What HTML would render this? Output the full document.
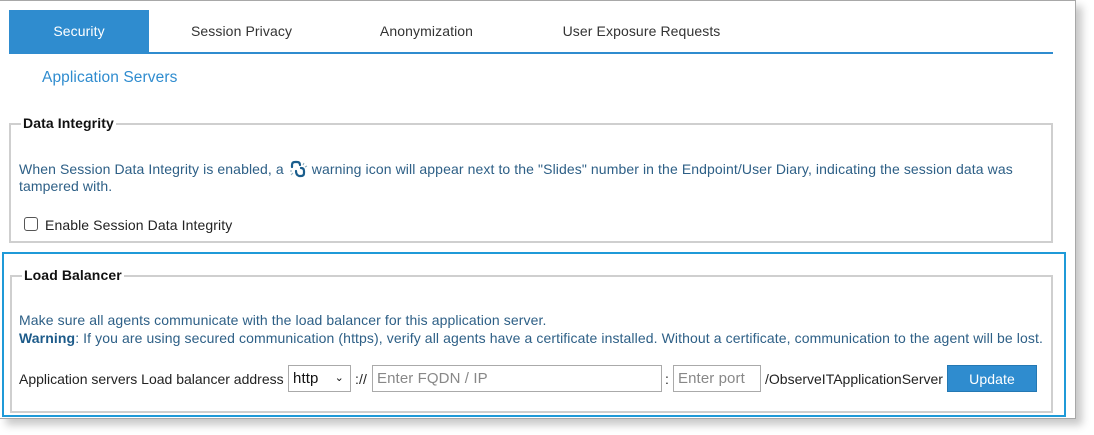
<!DOCTYPE html>
<html><head><meta charset="utf-8"><style>
*{box-sizing:border-box;margin:0;padding:0}
body{width:1094px;height:435px;background:#fff;font-family:"Liberation Sans",sans-serif;position:relative;overflow:hidden;color:#2d5f86;font-size:14px;letter-spacing:.1px}
.frame{position:absolute;left:0;top:0;width:1076px;height:419px;border:1px solid #a8a8a8;border-left:none;background:#fff;box-shadow:6px 6px 8px rgba(0,0,0,.22)}
.tabs{position:absolute;left:9px;top:10px;width:1044px;height:44px;border-bottom:2px solid #2f8ccf}
.tab{position:absolute;top:0;height:42px;line-height:42px;text-align:center;color:#333;font-size:14px}
.tab.on{background:#2f8ccf;color:#fff;left:0;width:140px}
.sub{position:absolute;left:42px;top:69px;color:#2f8ccf;font-size:15.5px}
.fs{position:absolute;border:2px solid #cfcfcf}
.lg{position:absolute;top:-10px;left:10px;background:#fff;padding:0 2px;font-weight:bold;color:#111;font-size:14px}
.t{position:absolute;white-space:nowrap;font-size:14px}
.hl{position:absolute;left:2px;top:252px;width:1064px;height:165px;border:2px solid #1f9ad8}
.inp{position:absolute;border:1px solid #aaa;height:27px;line-height:25px;color:#888;padding-left:4px;font-size:15px;background:#fff}
.btn{position:absolute;left:947px;top:365px;width:90px;height:27px;background:#2f8ccf;color:#fff;text-align:center;line-height:27px;font-size:14px;border:1px solid #2478b3}
</style></head><body>
<div class="frame"></div>
<div class="tabs">
<div class="tab on">Security</div>
<div class="tab" style="left:170px;width:125px">Session Privacy</div>
<div class="tab" style="left:355px;width:125px">Anonymization</div>
<div class="tab" style="left:535px;width:195px">User Exposure Requests</div>
</div>
<div class="sub">Application Servers</div>
<div class="fs" style="left:9px;top:123px;width:1044px;height:120px"><div class="lg">Data Integrity</div></div>
<div class="t" style="left:19px;top:160px;color:#2d5f86">When Session Data Integrity is enabled, a <svg width="20" height="18" viewBox="0 0 20 18" style="vertical-align:-4px"><path d="M4 7 L4 5 Q4 2 7 2 L9 2 Q12 2 12 5" fill="none" stroke="#1a5d8c" stroke-width="2.2" stroke-linecap="round"/><path d="M8 11 Q8 15 11 16 L13 16 Q16 16 16 13 L16 11 Q16 8 13 8" fill="none" stroke="#1a5d8c" stroke-width="2.2" stroke-linecap="round"/><path d="M2 11l2 0M3 15l2-2M15 5l1-2M17 7l2-1" stroke="#8ab" stroke-width="1"/></svg> warning icon will appear next to the "Slides" number in the Endpoint/User Diary, indicating the session data was</div>
<div class="t" style="left:19px;top:178px">tampered with.</div>
<div style="position:absolute;left:24px;top:217px;width:14px;height:14px;border:1px solid #555;border-radius:3px"></div>
<div class="t" style="left:45px;top:217px;color:#222">Enable Session Data Integrity</div>
<div class="hl"></div>
<div class="fs" style="left:10px;top:275px;width:1043px;height:138px"><div class="lg">Load Balancer</div></div>
<div class="t" style="left:19px;top:312px">Make sure all agents communicate with the load balancer for this application server.</div>
<div class="t" style="left:19px;top:330px"><b style="color:#1d5b8a">Warning</b>: If you are using secured communication (https), verify all agents have a certificate installed. Without a certificate, communication to the agent will be lost.</div>
<div class="t" style="left:19px;top:371px;color:#222;letter-spacing:0">Application servers Load balancer address</div>
<div class="inp" style="left:288px;top:365px;width:63px;color:#111;font-size:15px">http<span style="position:absolute;right:6px;top:0;font-size:11px">&#8964;</span></div>
<div class="t" style="left:355px;top:371px;color:#222">://</div>
<div class="inp" style="left:372px;top:365px;width:290px">Enter FQDN / IP</div>
<div class="t" style="left:665px;top:371px;color:#222">:</div>
<div class="inp" style="left:673px;top:365px;width:88px">Enter port</div>
<div class="t" style="left:765px;top:371px;color:#222;letter-spacing:0">/ObserveITApplicationServer</div>
<div class="btn">Update</div>
</body></html>
